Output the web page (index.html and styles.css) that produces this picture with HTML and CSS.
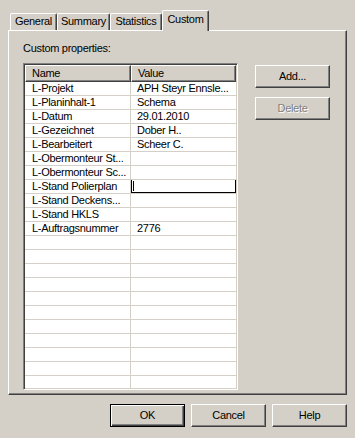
FILE: index.html
```html
<!DOCTYPE html>
<html>
<head>
<meta charset="utf-8">
<link rel="stylesheet" href="styles.css">
</head>
<body>
<div class="dialog">
  <div class="tabs">
    <div class="tab t-general">General</div>
    <div class="tab t-summary">Summary</div>
    <div class="tab t-stats">Statistics</div>
    <div class="tab active t-custom">Custom</div>
  </div>
  <div class="panel">
    <div class="label">Custom properties:</div>
    <div class="content">
      <div class="list">
        <div class="header">
          <div class="hcell c-name">Name</div>
          <div class="hcell c-value">Value</div>
        </div>
        <div class="rows">
          <div class="row"><div class="cell c-name">L-Projekt</div><div class="cell c-value">APH Steyr Ennsle...</div></div>
          <div class="row"><div class="cell c-name">L-Planinhalt-1</div><div class="cell c-value">Schema</div></div>
          <div class="row"><div class="cell c-name">L-Datum</div><div class="cell c-value">29.01.2010</div></div>
          <div class="row"><div class="cell c-name">L-Gezeichnet</div><div class="cell c-value">Dober H..</div></div>
          <div class="row"><div class="cell c-name">L-Bearbeitert</div><div class="cell c-value">Scheer C.</div></div>
          <div class="row"><div class="cell c-name">L-Obermonteur St...</div><div class="cell c-value"></div></div>
          <div class="row"><div class="cell c-name">L-Obermonteur Sc...</div><div class="cell c-value"></div></div>
          <div class="row"><div class="cell c-name">L-Stand Polierplan</div><div class="cell c-value editing"><span class="edit"><span class="caret"></span></span></div></div>
          <div class="row"><div class="cell c-name">L-Stand Deckens...</div><div class="cell c-value"></div></div>
          <div class="row"><div class="cell c-name">L-Stand HKLS</div><div class="cell c-value"></div></div>
          <div class="row"><div class="cell c-name">L-Auftragsnummer</div><div class="cell c-value">2776</div></div>
          <div class="row"><div class="cell c-name"></div><div class="cell c-value"></div></div>
          <div class="row"><div class="cell c-name"></div><div class="cell c-value"></div></div>
          <div class="row"><div class="cell c-name"></div><div class="cell c-value"></div></div>
          <div class="row"><div class="cell c-name"></div><div class="cell c-value"></div></div>
          <div class="row"><div class="cell c-name"></div><div class="cell c-value"></div></div>
          <div class="row"><div class="cell c-name"></div><div class="cell c-value"></div></div>
          <div class="row"><div class="cell c-name"></div><div class="cell c-value"></div></div>
          <div class="row"><div class="cell c-name"></div><div class="cell c-value"></div></div>
          <div class="row"><div class="cell c-name"></div><div class="cell c-value"></div></div>
          <div class="row"><div class="cell c-name"></div><div class="cell c-value"></div></div>
          <div class="row"><div class="cell c-name"></div><div class="cell c-value"></div></div>
          <div class="row"><div class="cell c-name"></div><div class="cell c-value"></div></div>
        </div>
      </div>
      <div class="side">
        <div class="btn">Add...</div>
        <div class="btn disabled">Delete</div>
      </div>
    </div>
  </div>
  <div class="footer">
    <div class="btn default">OK</div>
    <div class="btn">Cancel</div>
    <div class="btn">Help</div>
  </div>
</div>
</body>
</html>
```
FILE: styles.css
```css
* { box-sizing: border-box; }
html, body { margin: 0; padding: 0; background: #d4d0c8; }
body {
  font-family: "Liberation Sans", Arial, sans-serif;
  font-size: 11px;
  letter-spacing: -0.3px;
  color: #000;
}
.dialog {
  width: 355px;
  height: 438px;
  padding-top: 10px;
  display: flex;
  flex-direction: column;
}
.tabs {
  display: flex;
  align-items: flex-end;
  height: 20px;
  padding-left: 10px;
  position: relative;
  z-index: 1;
}
.tab {
  height: 17px;
  background: #d4d0c8;
  border-top: 1px solid #fff;
  border-left: 1px solid #fff;
  border-right: 1px solid #404040;
  box-shadow: inset -1px 0 #808080;
  border-top-left-radius: 2px;
  border-top-right-radius: 2px;
  text-align: center;
  line-height: 15px;
  white-space: nowrap;
}
.t-general { width: 47px; }
.t-summary { width: 53px; }
.t-stats { width: 52px; }
.t-custom { width: 47px; }
.tab.active {
  height: 21px;
  margin-bottom: -1px;
  line-height: 16px;
}
.panel {
  margin: 0 8px;
  height: 365px;
  border-top: 1px solid #fff;
  border-left: 1px solid #fff;
  border-right: 1px solid #404040;
  border-bottom: 1px solid #404040;
  box-shadow: inset -1px -1px #808080;
  padding: 11px 0 0 14px;
}
.label {
  height: 13px;
  line-height: 13px;
  margin-bottom: 8px;
}
.content {
  display: flex;
  gap: 17px;
}
.list {
  width: 215px;
  height: 327px;
  border-top: 1px solid #808080;
  border-left: 1px solid #808080;
  border-right: 1px solid #fff;
  border-bottom: 1px solid #fff;
  box-shadow: inset 1px 1px #404040, inset -1px -1px #d4d0c8;
  padding: 1px;
  background: #fff;
  overflow: hidden;
  display: flex;
  flex-direction: column;
}
.header {
  display: flex;
  height: 17px;
  flex: none;
}
.hcell {
  height: 17px;
  background: #d4d0c8;
  border-top: 1px solid #fff;
  border-left: 1px solid #fff;
  border-right: 1px solid #404040;
  border-bottom: 1px solid #404040;
  box-shadow: inset -1px -1px #808080;
  padding-left: 6px;
  line-height: 14px;
}
.hcell.c-name { width: 106px; }
.hcell.c-value { flex: 1; }
.rows { flex: 1; overflow: hidden; }
.row {
  display: flex;
  height: 14px;
  border-bottom: 1px solid #d4d0c8;
}
.cell {
  height: 13px;
  line-height: 13px;
  padding-left: 7px;
  white-space: nowrap;
  overflow: hidden;
}
.cell.c-name { width: 106px; border-right: 1px solid #d4d0c8; }
.cell.c-value { flex: 1; padding-left: 6px; }
.cell.editing { padding: 0; }
.edit {
  display: block;
  height: 14px;
  margin-top: -1px;
  border: 1px solid #000;
  padding: 1px 0 1px 1px;
}
.caret {
  display: block;
  width: 1px;
  height: 10px;
  background: #000;
}
.side {
  display: flex;
  flex-direction: column;
  gap: 9px;
  padding-top: 2px;
}
.btn {
  width: 75px;
  height: 23px;
  background: #d4d0c8;
  border-top: 1px solid #fff;
  border-left: 1px solid #fff;
  border-right: 1px solid #404040;
  border-bottom: 1px solid #404040;
  box-shadow: inset -1px -1px #808080;
  text-align: center;
  line-height: 20px;
}
.btn.disabled {
  color: #808080;
  text-shadow: 1px 1px #fff;
}
.btn.default {
  border: 1px solid #000;
  box-shadow: inset 1px 1px #fff, inset -1px -1px #404040, inset -2px -2px #808080;
}
.footer {
  display: flex;
  justify-content: flex-end;
  gap: 6px;
  padding-right: 8px;
  margin-top: 9px;
}
```
